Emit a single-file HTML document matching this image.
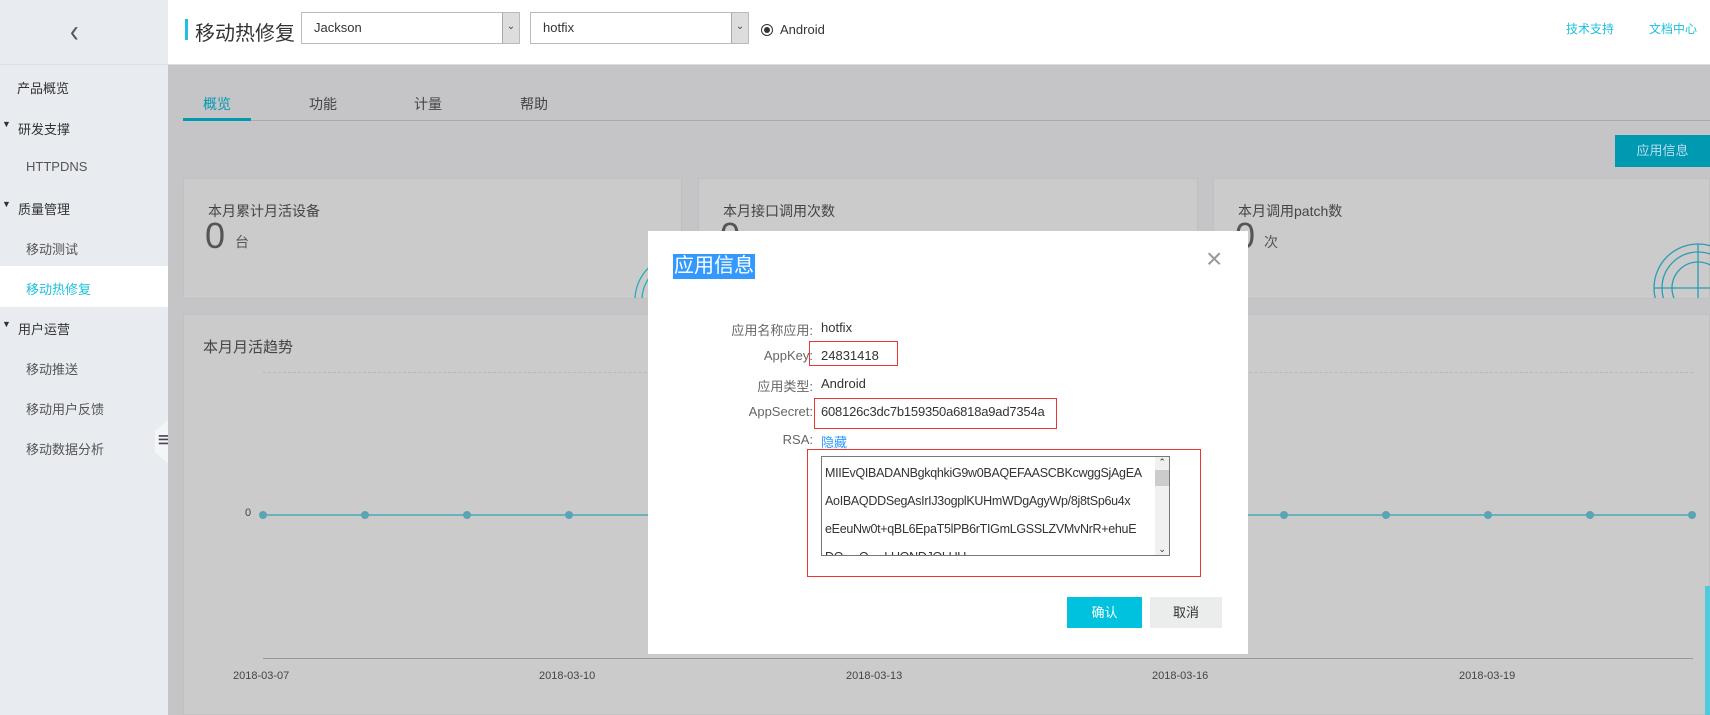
<!DOCTYPE html>
<html><head><meta charset="utf-8"><style>
*{margin:0;padding:0;box-sizing:border-box}
body{width:1710px;height:715px;overflow:hidden;position:relative;background:#c5c5c7;font-family:"Liberation Sans","Noto Sans CJK SC",sans-serif;font-size:13px;color:#333}
.a{position:absolute;white-space:nowrap}
#side{position:absolute;left:0;top:0;width:168px;height:715px;background:#e8ebf0}
#hdr{position:absolute;left:168px;top:0;width:1542px;height:65px;background:#fff;border-bottom:1px solid #ddd}
.sel{position:absolute;height:32px;border:1px solid #bbb;background:#fff;font-size:13px;padding:7px 12px}
.sel i{position:absolute;right:0;top:0;width:17px;height:30px;background:#ddd;border-left:1px solid #aaa;font-style:normal;font-size:10px;text-align:center;line-height:28px;color:#444}
.card{position:absolute;background:#cbcbcb;border:1px solid #c0c0c0}
.red{position:absolute;border:1px solid #e33}
.dot{position:absolute;width:8px;height:8px;border-radius:50%;background:#5aa4b6;top:511px}
</style></head><body>
<div id="side">
<div class="a" style="left:70px;top:16px;font-size:26px;color:#556;transform:scaleY(1.2)">‹</div>
<div style="position:absolute;top:64px;left:0;width:168px;height:1px;background:#dcdfe4"></div>
<div class="a" style="left:17px;top:78px">产品概览</div>
<div class="a" style="left:2px;top:119px;font-size:9px">▼</div><div class="a" style="left:18px;top:119px">研发支撑</div>
<div class="a" style="left:26px;top:159px;color:#555">HTTPDNS</div>
<div class="a" style="left:2px;top:199px;font-size:9px">▼</div><div class="a" style="left:18px;top:199px">质量管理</div>
<div class="a" style="left:26px;top:239px;color:#555">移动测试</div>
<div style="position:absolute;left:0;top:266px;width:168px;height:41px;background:#fff"></div>
<div class="a" style="left:26px;top:279px;color:#1ec0de">移动热修复</div>
<div class="a" style="left:2px;top:319px;font-size:9px">▼</div><div class="a" style="left:18px;top:319px">用户运营</div>
<div class="a" style="left:26px;top:359px;color:#555">移动推送</div>
<div class="a" style="left:26px;top:399px;color:#555">移动用户反馈</div>
<div class="a" style="left:26px;top:439px;color:#555">移动数据分析</div>
<div style="position:absolute;left:155px;top:420px;width:13px;height:43px;background:#f4f5f7;clip-path:polygon(100% 0,0 25%,0 75%,100% 100%)"></div>
<div class="a" style="left:158px;top:433px;font-size:12px;font-weight:bold;color:#445">☰</div>
</div>
<div id="hdr">
<div style="position:absolute;left:17px;top:19px;width:3px;height:21px;background:#1ec0de"></div>
<div class="a" style="left:27px;top:17px;font-size:20px;color:#333">移动热修复</div>
<div class="sel" style="left:133px;top:12px;width:219px">Jackson<i>⌄</i></div>
<div class="sel" style="left:362px;top:12px;width:219px">hotfix<i>⌄</i></div>
<div class="a" style="left:593px;top:24px;width:12px;height:12px;border:1px solid #333;border-radius:50%"><div style="margin:2px;width:6px;height:6px;border-radius:50%;background:#333"></div></div>
<div class="a" style="left:612px;top:22px;font-size:13px">Android</div>
<div class="a" style="left:1398px;top:20px;font-size:12px;color:#1ec0de">技术支持</div>
<div class="a" style="left:1481px;top:20px;font-size:12px;color:#1ec0de">文档中心</div>
</div>
<!-- tabs -->
<div style="position:absolute;left:183px;top:120px;width:1527px;height:1px;background:#aaa"></div>
<div style="position:absolute;left:183px;top:118px;width:68px;height:3px;background:#0099b2"></div>
<div class="a" style="left:203px;top:94px;font-size:14px;color:#0099b2">概览</div>
<div class="a" style="left:309px;top:94px;font-size:14px;color:#444">功能</div>
<div class="a" style="left:414px;top:94px;font-size:14px;color:#444">计量</div>
<div class="a" style="left:520px;top:94px;font-size:14px;color:#444">帮助</div>
<div style="position:absolute;left:1615px;top:135px;width:95px;height:32px;background:#0099b2;color:#bde;font-size:13px;text-align:center;line-height:32px">应用信息</div>
<div class="card" style="left:183px;top:178px;width:499px;height:121px"></div>
<div class="card" style="left:698px;top:178px;width:500px;height:121px"></div>
<div class="card" style="left:1213px;top:178px;width:497px;height:121px"></div>
<div class="a" style="left:208px;top:201px;font-size:14px;color:#444">本月累计月活设备</div>
<div class="a" style="left:205px;top:215px;font-size:36px;color:#555;font-weight:300">0</div><div class="a" style="left:235px;top:232px;font-size:14px;color:#555">台</div>
<div class="a" style="left:723px;top:201px;font-size:14px;color:#444">本月接口调用次数</div>
<div class="a" style="left:720px;top:215px;font-size:36px;color:#555">0</div>
<div class="a" style="left:1238px;top:201px;font-size:14px;color:#444">本月调用patch数</div>
<div class="a" style="left:1235px;top:215px;font-size:36px;color:#555">0</div><div class="a" style="left:1264px;top:232px;font-size:14px;color:#555">次</div>
<svg style="position:absolute;left:620px;top:240px" width="62" height="58"><g fill="none" stroke="#1ab0b8" stroke-width="1.3"><circle cx="60" cy="60" r="45"/><circle cx="60" cy="60" r="38"/><circle cx="60" cy="60" r="30"/></g></svg>
<svg style="position:absolute;left:1650px;top:174px" width="60" height="45"><g fill="none" stroke="#2a9db5" stroke-width="1.3"><circle cx="48" cy="98" r="40"/></g></svg>
<svg style="position:absolute;left:1650px;top:240px" width="60" height="58"><g fill="none" stroke="#2a9db5" stroke-width="1.3"><circle cx="48" cy="48" r="44"/><circle cx="48" cy="48" r="36"/><circle cx="48" cy="48" r="26"/><line x1="48" y1="4" x2="48" y2="58"/><line x1="4" y1="48" x2="60" y2="48"/></g></svg>
<!-- chart panel -->
<div class="card" style="left:183px;top:314px;width:1527px;height:401px"></div>
<div class="a" style="left:203px;top:336px;font-size:15px;color:#444">本月月活趋势</div>
<div style="position:absolute;left:263px;top:372px;width:1430px;border-top:1px dashed #b8b8b8"></div>
<div style="position:absolute;left:263px;top:514px;width:1430px;height:2px;background:#6ab0bf"></div>
<div class="a" style="left:245px;top:507px;font-size:11px;color:#444">0</div>
<div class="dot" style="left:259px"></div><div class="dot" style="left:361px"></div><div class="dot" style="left:463px"></div><div class="dot" style="left:565px"></div><div class="dot" style="left:1280px"></div><div class="dot" style="left:1382px"></div><div class="dot" style="left:1484px"></div><div class="dot" style="left:1586px"></div><div class="dot" style="left:1688px"></div>
<div style="position:absolute;left:263px;top:658px;width:1430px;height:1px;background:#999"></div>
<div class="a" style="left:233px;top:670px;font-size:11px;color:#444">2018-03-07</div>
<div class="a" style="left:539px;top:670px;font-size:11px;color:#444">2018-03-10</div>
<div class="a" style="left:846px;top:670px;font-size:11px;color:#444">2018-03-13</div>
<div class="a" style="left:1152px;top:670px;font-size:11px;color:#444">2018-03-16</div>
<div class="a" style="left:1459px;top:670px;font-size:11px;color:#444">2018-03-19</div>
<div style="position:absolute;left:1705px;top:586px;width:5px;height:129px;background:#4fc9e0"></div>
<!-- modal -->
<div style="position:absolute;left:648px;top:231px;width:600px;height:423px;background:#fff">
<div class="a" style="left:25px;top:23px;font-size:20px;color:#fff;background:#3399ff;padding:0 1px;line-height:25px">应用信息</div>
<div class="a" style="left:558px;top:12px;font-size:28px;color:#999;font-weight:200">×</div>
<div class="a" style="left:0;width:165px;text-align:right;top:89px;color:#666">应用名称应用:</div><div class="a" style="left:173px;top:89px">hotfix</div>
<div class="a" style="left:0;width:165px;text-align:right;top:117px;color:#666">AppKey:</div><div class="a" style="left:173px;top:117px">24831418</div>
<div class="a" style="left:0;width:165px;text-align:right;top:145px;color:#666">应用类型:</div><div class="a" style="left:173px;top:145px">Android</div>
<div class="a" style="left:0;width:165px;text-align:right;top:173px;color:#666">AppSecret:</div><div class="a" style="left:173px;top:173px;letter-spacing:-0.2px">608126c3dc7b159350a6818a9ad7354a</div>
<div class="a" style="left:0;width:165px;text-align:right;top:201px;color:#666">RSA:</div><div class="a" style="left:173px;top:201px;color:#2a9bff">隐藏</div>
<div style="position:absolute;left:173px;top:225px;width:349px;height:100px;border:1px solid #777;overflow:hidden;font-size:12.5px;letter-spacing:-0.3px">
<div class="a" style="left:3px;top:9px">MIIEvQIBADANBgkqhkiG9w0BAQEFAASCBKcwggSjAgEA</div>
<div class="a" style="left:3px;top:37px">AoIBAQDDSegAsIrIJ3ogplKUHmWDgAgyWp/8j8tSp6u4x</div>
<div class="a" style="left:3px;top:65px">eEeuNw0t+qBL6EpaT5lPB6rTIGmLGSSLZVMvNrR+ehuE</div>
<div class="a" style="left:3px;top:93px">DO.....O.....LUONDJOLUU</div>
<div style="position:absolute;right:0;top:0;width:14px;height:98px;background:#f0f0f0"><div style="font-size:9px;text-align:center">⌃</div><div style="margin-top:2px;height:16px;background:#ccc"></div><div style="position:absolute;bottom:0;width:14px;font-size:9px;text-align:center">⌄</div></div>
</div>
<div style="position:absolute;left:419px;top:366px;width:75px;height:31px;background:#00c1de;color:#fff;text-align:center;line-height:31px">确认</div>
<div style="position:absolute;left:502px;top:366px;width:72px;height:31px;background:#ebecec;color:#333;text-align:center;line-height:31px">取消</div>
</div>
<div class="red" style="left:809px;top:341px;width:89px;height:25px"></div>
<div class="red" style="left:814px;top:398px;width:243px;height:31px"></div>
<div class="red" style="left:807px;top:449px;width:394px;height:128px"></div>
</body></html>
